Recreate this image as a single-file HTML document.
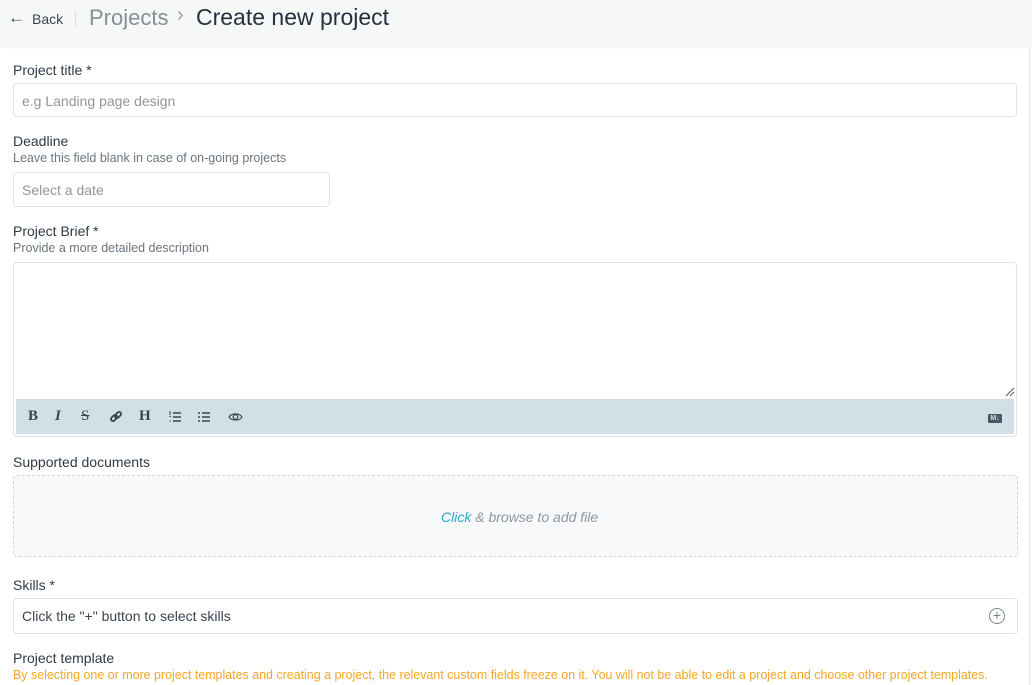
<!DOCTYPE html>
<html><head><meta charset="utf-8"><style>
*{box-sizing:border-box;margin:0;padding:0}
body{width:1032px;height:685px;overflow:hidden;background:#fff;font-family:"Liberation Sans",sans-serif;color:#333;position:relative}
.hdr{position:absolute;left:0;top:0;width:1032px;height:45px;background:#f6f7f7;box-shadow:0 1px 4px rgba(0,0,0,.08)}
.vline{position:absolute;left:1029px;top:45px;width:1px;height:640px;background:#e6e6e6}
.t{position:absolute;white-space:nowrap}
.lbl{font-size:14px;color:#2f3a45}
.sub{font-size:12.5px;color:#6b7580}
.box{position:absolute;border:1px solid #dfe3e6;border-radius:4px;background:#fff}
.ph{font-size:14px;color:#8f969c}
.tb{position:absolute;left:16px;top:399px;width:998px;height:35px;background:#d1e0e4}
.ic{position:absolute;top:408px;font-size:15px;color:#3a4450;font-family:"Liberation Serif",serif;font-weight:bold}
svg.s{position:absolute;top:410px}
</style></head><body>
<div class="hdr">
<div class="t" style="left:8px;top:8px;font-size:17px;color:#3a4450">←</div>
<div class="t" style="left:32px;top:11px;font-size:14px;color:#3a4450">Back</div>
<div style="position:absolute;left:75px;top:11px;width:1px;height:16px;background:#dcdfe2"></div>
<div class="t" style="left:89px;top:5px;font-size:22px;color:#888e94">Projects</div>
<div class="t" style="left:177px;top:4px;font-size:20px;color:#999">›</div>
<div class="t" style="left:196px;top:4px;font-size:23px;color:#26303c">Create new project</div>
</div>
<div class="vline"></div>
<div class="t lbl" style="left:13px;top:62px">Project title *</div>
<div class="box" style="left:13px;top:83px;width:1004px;height:34px"></div>
<div class="t ph" style="left:22px;top:93px">e.g Landing page design</div>
<div class="t lbl" style="left:13px;top:133px">Deadline</div>
<div class="t sub" style="left:13px;top:151px">Leave this field blank in case of on-going projects</div>
<div class="box" style="left:13px;top:172px;width:317px;height:35px"></div>
<div class="t ph" style="left:22px;top:182px">Select a date</div>
<div class="t lbl" style="left:13px;top:223px">Project Brief *</div>
<div class="t sub" style="left:13px;top:241px">Provide a more detailed description</div>
<div class="box" style="left:13px;top:262px;width:1004px;height:175px"></div>
<svg style="position:absolute;left:1005px;top:387px" width="10" height="10"><path d="M1 9L9 1M5 9L9 5" stroke="#555" stroke-width="1"/></svg>
<div class="tb"></div>
<div class="ic" style="left:28px">B</div>
<div class="ic" style="left:55px;font-style:italic">I</div>
<div class="ic" style="left:81px;text-decoration:line-through;font-weight:normal">S</div>
<svg class="s" style="left:109px" width="14" height="14" viewBox="0 0 14 14"><g fill="none" stroke="#3a4450" stroke-width="1.8"><rect x="1.5" y="6" width="7" height="4" rx="2" transform="rotate(-45 5 8)"/><rect x="5.5" y="3" width="7" height="4" rx="2" transform="rotate(-45 9 5)"/></g></svg>
<div class="ic" style="left:139px">H</div>
<svg class="s" style="left:168px" width="14" height="14" viewBox="0 0 14 14"><g stroke="#3a4450" stroke-width="1.4"><path d="M5 3H13M5 7H13M5 11H13"/><path d="M2 1V5M1.5 6.5H3M1.5 11H3" stroke-width="1"/></g></svg>
<svg class="s" style="left:197px" width="14" height="14" viewBox="0 0 14 14"><g stroke="#3a4450" stroke-width="1.4"><path d="M5 3H13M5 7H13M5 11H13M1 3H3M1 7H3M1 11H3"/></g></svg>
<svg class="s" style="left:228px" width="15" height="14" viewBox="0 0 15 14"><g fill="none" stroke="#3a4450" stroke-width="1.2"><path d="M1 7C3 3 12 3 14 7C12 11 3 11 1 7Z"/><circle cx="7.5" cy="7" r="2.3"/></g></svg>
<div style="position:absolute;left:988px;top:414px;width:14px;height:9px;background:#4a5565;border-radius:1px;color:#d1e0e4;font-size:7px;font-weight:bold;line-height:9px;text-align:center">M↓</div>
<div class="t lbl" style="left:13px;top:454px">Supported documents</div>
<div style="position:absolute;left:13px;top:475px;width:1005px;height:82px;border:1px dashed #cfd6da;border-radius:4px;background:#f8f9fa"></div>
<div class="t" style="left:441px;top:509px;font-size:14px;font-style:italic;color:#8f969c"><span style="color:#26a9c7">Click</span> &amp; browse to add file</div>
<div class="t lbl" style="left:13px;top:577px">Skills *</div>
<div class="box" style="left:13px;top:598px;width:1005px;height:36px"></div>
<div class="t" style="left:22px;top:608px;font-size:14px;color:#3a4450">Click the "+" button to select skills</div>
<div style="position:absolute;left:989px;top:608px;width:16px;height:16px;border:1.3px solid #7a8590;border-radius:50%;color:#7a8590;font-size:14px;line-height:13px;text-align:center">+</div>
<div class="t lbl" style="left:13px;top:650px">Project template</div>
<div class="t" style="left:13px;top:668px;font-size:12.45px;color:#f5a623">By selecting one or more project templates and creating a project, the relevant custom fields freeze on it. You will not be able to edit a project and choose other project templates.</div>
</body></html>
